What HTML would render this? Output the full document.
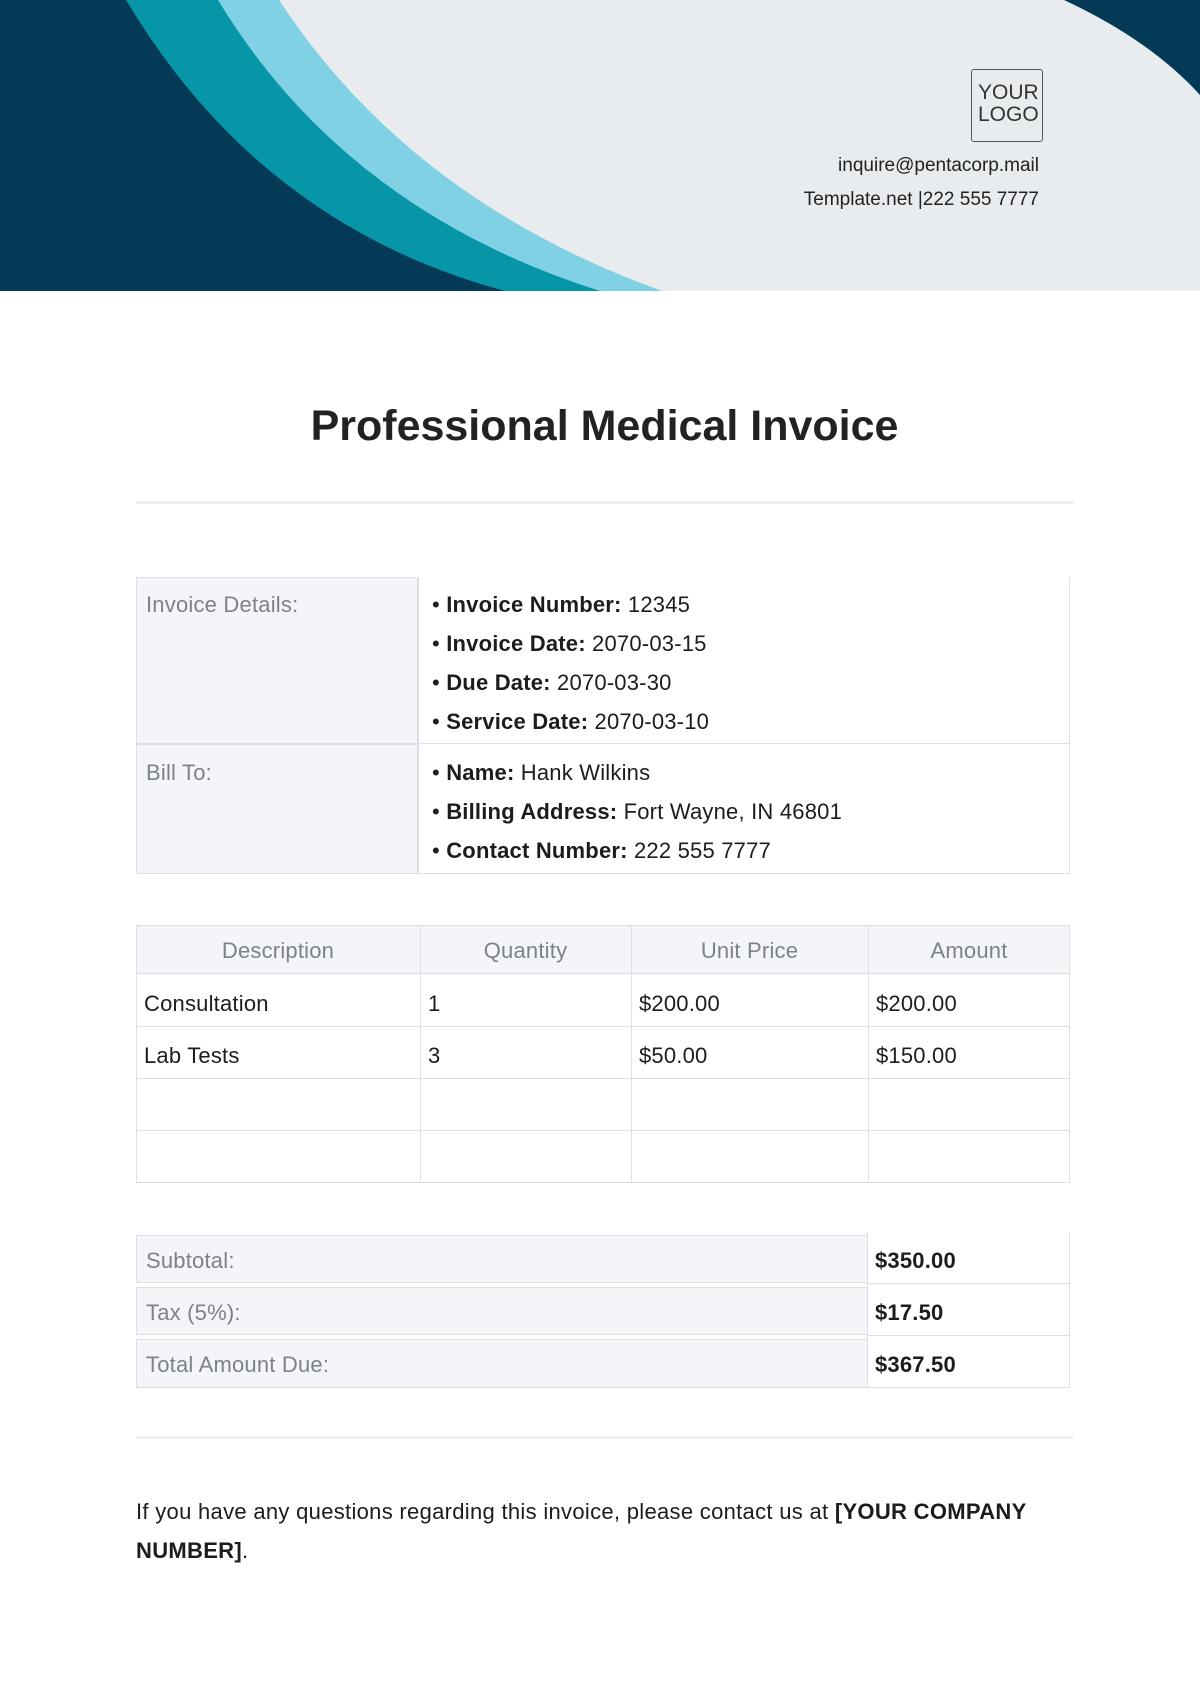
<!DOCTYPE html>
<html><head><meta charset="utf-8"><style>
*{margin:0;padding:0;box-sizing:border-box}
body{width:1200px;height:1696px;position:relative;background:#fff;font-family:"Liberation Sans",Arial,sans-serif;color:#1c1c1c;overflow:hidden}
.a{position:absolute}
.t{font-size:22px;line-height:24px;white-space:nowrap;letter-spacing:0.2px}
.g{color:#7b8289}
.box{position:absolute;border:1px solid #dcdfe3}
.bg{background:#f4f5f8}
.hr{position:absolute;left:136px;width:937px;height:3px;background:#eceef0}
b{font-weight:bold}
</style></head><body>
<svg class="a" style="left:0;top:0" width="1200" height="291" viewBox="0 0 1200 291">
<rect width="1200" height="291" fill="#e8ecef"/>
<path d="M0,0 L279,0 Q410,200 662,291 L0,291 Z" fill="#7fd1e3"/>
<path d="M0,0 L218,0 Q345,210 600,291 L0,291 Z" fill="#0696a8"/>
<path d="M0,0 L126,0 Q260,225 505,291 L0,291 Z" fill="#053a57"/>
<path d="M1064,0 Q1150,40 1200,95 L1200,0 Z" fill="#053a57"/>
</svg>
<div class="a" style="left:971px;top:69px;width:72px;height:73px;border:1.5px solid #555;border-radius:3px;font-size:21px;line-height:22px;color:#333;padding:12px 0 0 6px">YOUR<br>LOGO</div>
<div class="a" style="right:161px;top:155px;font-size:19px;color:#222">inquire@pentacorp.mail</div>
<div class="a" style="right:161px;top:189px;font-size:19px;color:#222">Template.net |222 555 7777</div>
<div class="a" style="left:0;width:1209px;top:402px;text-align:center;font-size:43px;font-weight:bold;color:#222">Professional Medical Invoice</div>
<div class="hr" style="top:501px"></div>

<div class="box bg" style="left:136px;top:577px;width:282px;height:167px"></div>
<div class="box" style="left:418px;top:577px;width:652px;height:167px;border-top:none"></div>
<div class="box bg" style="left:136px;top:743px;width:282px;height:131px;border-top:2px solid #dcdfe3"></div>
<div class="box" style="left:418px;top:743px;width:652px;height:131px"></div>
<div class="a t g" style="left:146px;top:593px">Invoice Details:</div>
<div class="a t g" style="left:146px;top:761px">Bill To:</div>
<div class="a t" style="left:432px;top:593px">• <b>Invoice Number:</b> 12345</div>
<div class="a t" style="left:432px;top:632px">• <b>Invoice Date:</b> 2070-03-15</div>
<div class="a t" style="left:432px;top:671px">• <b>Due Date:</b> 2070-03-30</div>
<div class="a t" style="left:432px;top:710px">• <b>Service Date:</b> 2070-03-10</div>
<div class="a t" style="left:432px;top:761px">• <b>Name:</b> Hank Wilkins</div>
<div class="a t" style="left:432px;top:800px">• <b>Billing Address:</b> Fort Wayne, IN 46801</div>
<div class="a t" style="left:432px;top:839px">• <b>Contact Number:</b> 222 555 7777</div>

<div class="box bg" style="left:136px;top:925px;width:934px;height:49px"></div>
<div class="box" style="left:136px;top:973px;width:934px;height:54px"></div>
<div class="box" style="left:136px;top:1026px;width:934px;height:53px"></div>
<div class="box" style="left:136px;top:1078px;width:934px;height:53px"></div>
<div class="box" style="left:136px;top:1130px;width:934px;height:53px"></div>
<div class="a" style="left:420px;top:925px;width:1px;height:258px;background:#dcdfe3"></div>
<div class="a" style="left:631px;top:925px;width:1px;height:258px;background:#dcdfe3"></div>
<div class="a" style="left:868px;top:925px;width:1px;height:258px;background:#dcdfe3"></div>
<div class="a t g" style="left:136px;width:284px;text-align:center;top:939px">Description</div>
<div class="a t g" style="left:420px;width:211px;text-align:center;top:939px">Quantity</div>
<div class="a t g" style="left:631px;width:237px;text-align:center;top:939px">Unit Price</div>
<div class="a t g" style="left:868px;width:202px;text-align:center;top:939px">Amount</div>
<div class="a t" style="left:144px;top:992px">Consultation</div>
<div class="a t" style="left:428px;top:992px">1</div>
<div class="a t" style="left:639px;top:992px">$200.00</div>
<div class="a t" style="left:876px;top:992px">$200.00</div>
<div class="a t" style="left:144px;top:1044px">Lab Tests</div>
<div class="a t" style="left:428px;top:1044px">3</div>
<div class="a t" style="left:639px;top:1044px">$50.00</div>
<div class="a t" style="left:876px;top:1044px">$150.00</div>

<div class="box bg" style="left:136px;top:1235px;width:732px;height:48px"></div>
<div class="box bg" style="left:136px;top:1287px;width:732px;height:48px"></div>
<div class="box bg" style="left:136px;top:1339px;width:732px;height:49px"></div>
<div class="box" style="left:867px;top:1232px;width:203px;height:52px;border-top:none"></div>
<div class="box" style="left:867px;top:1283px;width:203px;height:53px"></div>
<div class="box" style="left:867px;top:1335px;width:203px;height:53px"></div>
<div class="a t g" style="left:146px;top:1249px">Subtotal:</div>
<div class="a t g" style="left:146px;top:1301px">Tax (5%):</div>
<div class="a t g" style="left:146px;top:1353px">Total Amount Due:</div>
<div class="a t" style="left:875px;top:1249px"><b>$350.00</b></div>
<div class="a t" style="left:875px;top:1301px"><b>$17.50</b></div>
<div class="a t" style="left:875px;top:1353px"><b>$367.50</b></div>

<div class="hr" style="top:1436px"></div>
<div class="a" style="left:136px;top:1492px;width:935px;font-size:22px;line-height:39px;letter-spacing:0.3px">If you have any questions regarding this invoice, please contact us at <b>[YOUR COMPANY NUMBER]</b>.</div>
</body></html>
